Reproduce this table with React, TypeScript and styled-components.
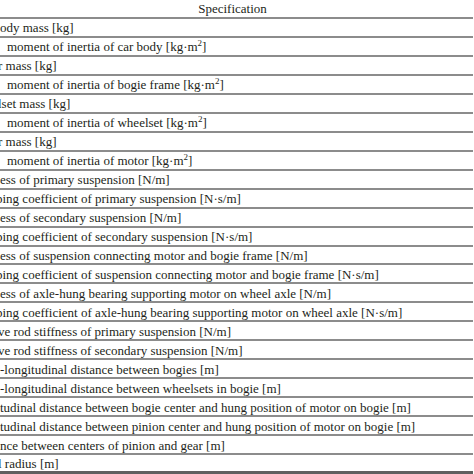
import styled, { createGlobalStyle } from 'styled-components';

const GlobalStyle = createGlobalStyle`
  html, body {
    margin: 0;
    padding: 0;
    background: #ffffff;
  }
  body {
    font-family: 'Liberation Serif', 'Times New Roman', serif;
    color: #231f20;
  }
`;

interface RowData {
  text: string;
  lead: number;
  sq?: boolean;
}

const rows: RowData[] = [
  { text: 'ody mass [kg]', lead: 0 },
  { text: 'moment of inertia of car body [kg·m', lead: 7, sq: true },
  { text: 'r mass [kg]', lead: -2 },
  { text: 'moment of inertia of bogie frame [kg·m', lead: 7, sq: true },
  { text: 'lset mass [kg]', lead: -2 },
  { text: 'moment of inertia of wheelset [kg·m', lead: 7, sq: true },
  { text: 'r mass [kg]', lead: -2 },
  { text: 'moment of inertia of motor [kg·m', lead: 7, sq: true },
  { text: 'ess of primary suspension [N/m]', lead: 0 },
  { text: 'ping coefficient of primary suspension [N·s/m]', lead: -4 },
  { text: 'ess of secondary suspension [N/m]', lead: 0 },
  { text: 'ping coefficient of secondary suspension [N·s/m]', lead: -4 },
  { text: 'ess of suspension connecting motor and bogie frame [N/m]', lead: 0 },
  { text: 'ping coefficient of suspension connecting motor and bogie frame [N·s/m]', lead: -4 },
  { text: 'ess of axle-hung bearing supporting motor on wheel axle [N/m]', lead: 0 },
  { text: 'ping coefficient of axle-hung bearing supporting motor on wheel axle [N·s/m]', lead: -4 },
  { text: 've rod stiffness of primary suspension [N/m]', lead: -2 },
  { text: 've rod stiffness of secondary suspension [N/m]', lead: -2 },
  { text: '-longitudinal distance between bogies [m]', lead: 0 },
  { text: '-longitudinal distance between wheelsets in bogie [m]', lead: 0 },
  { text: 'tudinal distance between bogie center and hung position of motor on bogie [m]', lead: 0 },
  { text: 'tudinal distance between pinion center and hung position of motor on bogie [m]', lead: 0 },
  { text: 'nce between centers of pinion and gear [m]', lead: 0 },
  { text: 'l radius [m]', lead: -2 },
];

const Table = styled.div`
  width: 473px;
  height: 474px;
  display: grid;
  grid-template-rows: 19px repeat(24, 1fr);
  overflow: hidden;
`;

const HeaderRow = styled.div`
  display: flex;
  align-items: center;
  justify-content: center;
  padding-right: 8px;
  border-bottom: 2px solid #8c8c8c;
  font-size: 13px;
`;

const Row = styled.div<{ $last?: boolean }>`
  display: flex;
  align-items: center;
  border-bottom: ${(p) => (p.$last ? '3px solid #5f5f5f' : '2px solid #8c8c8c')};
  overflow: hidden;
  white-space: nowrap;
`;

const Cell = styled.span<{ $lead: number }>`
  display: block;
  margin-left: ${(p) => p.$lead}px;
  font-size: 13px;
  line-height: 1;
  padding-top: 1px;
`;

const Sup = styled.sup`
  font-size: 9px;
  line-height: 0;
  vertical-align: 5px;
`;

export default function App() {
  return (
    <>
      <GlobalStyle />
      <Table>
        <HeaderRow>Specification</HeaderRow>
        {rows.map((row, i) => (
          <Row key={i} $last={i === rows.length - 1}>
            <Cell $lead={row.lead}>
              {row.text}
              {row.sq && (
                <>
                  <Sup>2</Sup>]
                </>
              )}
            </Cell>
          </Row>
        ))}
      </Table>
    </>
  );
}
